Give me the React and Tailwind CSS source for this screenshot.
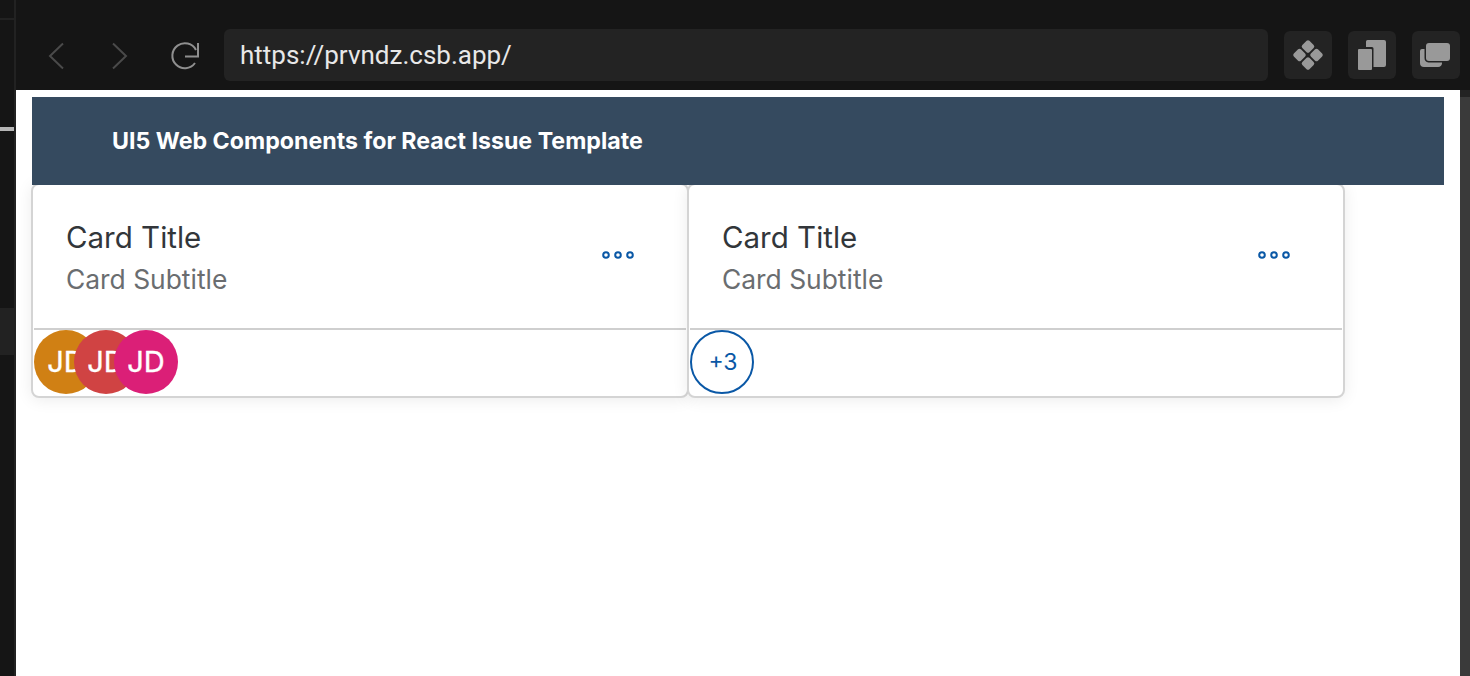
const font72 = "font-['Inter','Noto_Sans',sans-serif]";

const Avatar = ({ bg, shift }) => (
  <div
    className={`flex h-16 w-16 shrink-0 items-center justify-center rounded-full text-[29px] text-white [-webkit-text-stroke:0.4px_white] ${bg} ${shift}`}
  >
    JD
  </div>
);

const Card = ({ children }) => (
  <div className="flex h-[215px] w-[658px] shrink-0 flex-col rounded-lg border-2 border-[#d4d4d4] bg-white shadow-[0_2px_16px_rgba(0,0,0,0.08)] not-first:-ml-[2px]">
    <div className="flex h-[143px] items-center justify-between pl-[33px] pr-[53px]">
      <div>
        <div className="text-[29.5px] leading-9 text-[#32363a]">Card Title</div>
        <div className="mt-[8px] text-[26.4px] leading-8 text-[#6a6d70]">Card Subtitle</div>
      </div>
      <svg className="mb-1" width="32" height="10" viewBox="0 0 32 10" fill="none" stroke="#0a58a6" strokeWidth="2">
        <circle cx="4" cy="5" r="2.8" />
        <circle cx="16" cy="5" r="2.8" />
        <circle cx="28" cy="5" r="2.8" />
      </svg>
    </div>
    <div className="mx-px h-[2px] bg-[#cfcfcf]" />
    <div className="ml-px flex items-start">{children}</div>
  </div>
);

const ToolButton = ({ children }) => (
  <div className="flex h-12 w-12 items-center justify-center rounded-md bg-[#232323]">{children}</div>
);

export default function App() {
  return (
    <div className="flex h-[676px] w-[1470px] overflow-hidden bg-[#151515]">
      <div className="w-4 shrink-0 border-r-2 border-[#222]">
        <div className="mt-[18px] h-[2px] bg-[#222]" />
        <div className="mt-[107px] h-[4px] bg-[#b5b5b5]" />
        <div className="mt-[177px] h-[47px] bg-[#222]" />
      </div>
      <div className="flex min-w-0 flex-1 flex-col">
        <div className="flex h-[90px] items-end pb-[9px]">
          <svg className="ml-[32px] mb-[11px]" width="16" height="28" viewBox="0 0 16 28" fill="none" stroke="#4a4a4a" strokeWidth="2">
            <path d="M15 1.5 2 14l13 12.5" />
          </svg>
          <svg className="ml-[48px] mb-[11px]" width="16" height="28" viewBox="0 0 16 28" fill="none" stroke="#4a4a4a" strokeWidth="2">
            <path d="M1 1.5 14 14 1 26.5" />
          </svg>
          <svg className="ml-[41px] mb-[11px]" width="30" height="30" viewBox="0 0 30 30" fill="none" stroke="#8f8f8f" strokeWidth="2">
            <path d="M27 10A12.5 12.5 0 1 0 26 23" />
            <path d="M29 3v13.5H16" />
          </svg>
          <div className="ml-[25px] flex h-[52px] w-[1044px] items-center rounded-md bg-[#232323] pl-4 font-['Roboto',sans-serif] text-[26px] text-[#e8e8e8]">
            https://prvndz.csb.app/
          </div>
          <div className="mb-[2px] ml-4 flex gap-4">
            <ToolButton>
              <svg width="32" height="32" viewBox="0 0 32 32" fill="#999">
                <rect x="11" y="2.5" width="10" height="10" rx="2" transform="rotate(45 16 7.5)" />
                <rect x="11" y="19.5" width="10" height="10" rx="2" transform="rotate(45 16 24.5)" />
                <rect x="2.5" y="11" width="10" height="10" rx="2" transform="rotate(45 7.5 16)" />
                <rect x="19.5" y="11" width="10" height="10" rx="2" transform="rotate(45 24.5 16)" />
              </svg>
            </ToolButton>
            <ToolButton>
              <svg width="28" height="30" viewBox="0 0 28 30" fill="#999">
                <path d="M8 7V1.5A1.5 1.5 0 0 1 9.5 0H26a2 2 0 0 1 2 2v23a2 2 0 0 1-2 2H15.5V8.5A1.5 1.5 0 0 0 14 7z" />
                <rect x="0" y="9" width="14" height="21" rx="1" />
              </svg>
            </ToolButton>
            <ToolButton>
              <svg width="32" height="24" viewBox="0 0 32 24" fill="#999">
                <rect x="6" y="0" width="24" height="18" rx="3" />
                <path d="M0 8a2 2 0 0 1 2-2h2.5v9a4.5 4.5 0 0 0 4 4.5H22a4 4 0 0 1-4 4.5H4a4 4 0 0 1-4-4z" />
              </svg>
            </ToolButton>
          </div>
        </div>
        <div className="flex min-h-0 flex-1">
          <div className={`h-full w-[1444px] shrink-0 bg-white pl-4 pr-4 pt-[7px] ${font72}`}>
            <div className="relative z-10 flex h-[88px] items-center bg-[#354a5f] pl-20 text-[23.2px] font-bold text-white">
              UI5 Web Components for React Issue Template
            </div>
            <div className="-ml-px -mt-[2px] flex">
              <Card>
                <Avatar bg="bg-[#d08014]" shift="" />
                <Avatar bg="bg-[#d04343]" shift="-ml-6" />
                <Avatar bg="bg-[#db1f77]" shift="-ml-6" />
              </Card>
              <Card>
                <div className="flex h-16 w-16 items-center justify-center rounded-full border-2 border-[#0a58a6] pl-[2px] text-[23px] text-[#0a58a6]">
                  +3
                </div>
              </Card>
            </div>
          </div>
          <div className="flex-1 border-t-[7px] border-[#232323] bg-[#3a3a3a]" />
        </div>
      </div>
    </div>
  );
}
